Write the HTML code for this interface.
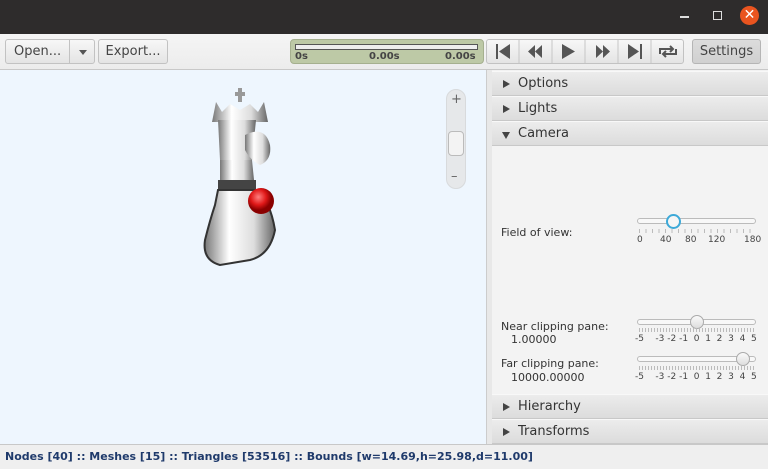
<!DOCTYPE html><html><head><style>
*{box-sizing:border-box;margin:0;padding:0}
body{width:768px;height:469px;overflow:hidden;font-family:"DejaVu Sans","Liberation Sans",sans-serif;font-size:13px;color:#333;background:#f2f2f2;position:relative}
.a{position:absolute}
.btn{position:absolute;border:1px solid #c2c2c2;border-radius:3px;background:linear-gradient(#f7f7f7,#e4e4e4);height:25px;top:39px;display:flex;align-items:center;justify-content:center;font-size:13px;color:#444}
.hd{position:absolute;left:492px;width:276px;height:25px;background:linear-gradient(#ececec,#dcdcdc);border-bottom:1px solid #c8c8c8;border-top:1px solid #f8f8f8;font-size:13px;color:#333;line-height:23px;padding-left:26px}
.tri{position:absolute;left:11px;top:8px;width:0;height:0;border-left:7px solid #444;border-top:4px solid transparent;border-bottom:4px solid transparent}
.trd{position:absolute;left:10px;top:10px;width:0;height:0;border-top:7px solid #444;border-left:4px solid transparent;border-right:4px solid transparent}
.lbl{position:absolute;font-size:11px;color:#333}
.sm{position:absolute;font-size:9px;color:#444}
.track{position:absolute;height:6px;border:1px solid #bbb;border-radius:3px;background:#f8f8f8}
</style></head><body>
<div class="a" style="left:0;top:0;width:768px;height:34px;background:#2e2c2c"></div>
<div class="a" style="left:680px;top:16px;width:9px;height:1.5px;background:#ddd"></div>
<div class="a" style="left:713px;top:11px;width:9px;height:9px;border:1.5px solid #ddd"></div>
<div class="a" style="left:740px;top:6px;width:19px;height:19px;border-radius:50%;background:#e9541f;color:#fff;font-size:14px;line-height:19px;text-align:center">✕</div>
<div class="a" style="left:0;top:34px;width:768px;height:36px;background:linear-gradient(#f5f5f5,#ececec);border-bottom:1px solid #c8c8c8"></div>
<div class="btn" style="left:5px;width:90px;justify-content:flex-start;padding-left:8px">Open...<span style="position:absolute;left:63px;top:0;bottom:0;border-left:1px solid #c2c2c2"></span><span style="position:absolute;left:73px;top:10px;border-top:5px solid #555;border-left:4px solid transparent;border-right:4px solid transparent"></span></div>
<div class="btn" style="left:98px;width:70px">Export...</div>
<div class="a" style="left:290px;top:39px;width:194px;height:25px;border:1px solid #a5b08f;border-radius:4px;background:#bdc9a6"></div>
<div class="a" style="left:295px;top:44px;width:183px;height:6px;border:1px solid #555;background:#eee"></div>
<div class="a" style="left:295px;top:51px;font-size:10px;font-weight:bold;color:#444">0s</div>
<div class="a" style="left:369px;top:51px;font-size:10px;font-weight:bold;color:#444">0.00s</div>
<div class="a" style="left:445px;top:51px;font-size:10px;font-weight:bold;color:#444">0.00s</div>
<div class="a" style="left:486px;top:39px;width:198px;height:25px;border:1px solid #c2c2c2;border-radius:3px;background:linear-gradient(#f7f7f7,#e4e4e4)"></div>
<svg class="a" style="left:486px;top:39px" width="198" height="25" fill="#555" stroke="#555">
<g stroke="#c6c6c6"><line x1="33" y1="1" x2="33" y2="24"/><line x1="66" y1="1" x2="66" y2="24"/><line x1="99" y1="1" x2="99" y2="24"/><line x1="132" y1="1" x2="132" y2="24"/><line x1="165" y1="1" x2="165" y2="24"/></g>
<rect x="10" y="5" width="2" height="15" stroke="none"/><path d="M24 5 L13 12.5 L24 20Z" stroke="none"/>
<path d="M49 6 L42 12.5 L49 19Z M56 6 L49 12.5 L56 19Z" stroke="none"/>
<path d="M76 5 L89 12.5 L76 20Z" stroke="none"/>
<path d="M110 6 L117 12.5 L110 19Z M117 6 L124 12.5 L117 19Z" stroke="none"/>
<path d="M142 5 L153 12.5 L142 20Z" stroke="none"/><rect x="154" y="5" width="2" height="15" stroke="none"/>
<path d="M174 15 V10 h13 M184 7 l3 3 -3 3 M190 10 v5 h-13 M180 18 l-3 -3 3 -3" fill="none" stroke-width="2"/>
</svg>
<div class="btn" style="left:692px;width:69px;background:linear-gradient(#dcdcdc,#d0d0d0);border-color:#b5b5b5">Settings</div>
<div class="a" style="left:0;top:70px;width:486px;height:374px;background:#eef6fe"></div>
<div class="a" style="left:486px;top:70px;width:6px;height:374px;background:#e8e8e8;border-left:1px solid #ccc"></div>
<div class="a" style="left:446px;top:89px;width:20px;height:100px;border-radius:10px;background:#e6e8ea;border:1px solid #d8dadc"></div>
<div class="a" style="left:451px;top:92px;font-size:13px;color:#666">+</div>
<div class="a" style="left:451px;top:169px;font-size:13px;color:#666">–</div>
<div class="a" style="left:448px;top:131px;width:16px;height:25px;border-radius:4px;background:#f3f3f3;border:1px solid #bbb"></div>
<svg class="a" style="left:190px;top:80px" width="100" height="190">
<defs><linearGradient id="g" x1="0" x2="1"><stop offset="0" stop-color="#777"/><stop offset=".35" stop-color="#fff"/><stop offset=".7" stop-color="#ddd"/><stop offset="1" stop-color="#666"/></linearGradient>
<radialGradient id="r" cx=".4" cy=".35"><stop offset="0" stop-color="#ff8080"/><stop offset=".6" stop-color="#e01818"/><stop offset="1" stop-color="#8a0000"/></radialGradient></defs>
<rect x="48" y="8" width="4" height="14" fill="#999"/><rect x="45" y="12" width="10" height="4" fill="#999"/>
<path d="M22 42 L26 22 L32 32 L40 24 L50 30 L60 24 L68 32 L74 22 L78 42Z" fill="url(#g)"/>
<path d="M28 40 L30 80 L62 80 L66 40Z" fill="url(#g)"/>
<path d="M55 55 Q75 45 80 65 Q82 80 70 85 Q60 80 55 70Z" fill="url(#g)"/>
<path d="M30 80 L62 80 L64 100 L30 100Z" fill="url(#g)"/>
<rect x="28" y="100" width="38" height="10" fill="#444"/>
<path d="M28 110 L66 110 Q80 120 85 150 Q80 175 60 180 L30 185 Q12 180 15 160 Q20 140 25 125Z" fill="url(#g)" stroke="#333" stroke-width="2"/>
<circle cx="71" cy="121" r="13" fill="url(#r)"/>
</svg>
<div class="hd" style="top:71px"><span class="tri"></span>Options</div>
<div class="hd" style="top:96px"><span class="tri"></span>Lights</div>
<div class="hd" style="top:121px"><span class="trd"></span>Camera</div>
<div class="a" style="left:492px;top:146px;width:276px;height:248px;background:#f3f3f3"></div>
<div class="lbl" style="left:501px;top:226px">Field of view:</div>
<div class="track" style="left:637px;top:218px;width:119px"></div>
<div class="a" style="left:666px;top:214px;width:15px;height:15px;border-radius:50%;border:2px solid #3da9d8;background:#f5f5f5"></div>
<div class="a" style="left:639px;top:229px;width:116px;height:4px;background:repeating-linear-gradient(90deg,#bbb 0 1px,transparent 1px 6.5px)"></div>
<div class="sm" style="left:637px;top:235px">0</div><div class="sm" style="left:660px;top:235px">40</div><div class="sm" style="left:685px;top:235px">80</div><div class="sm" style="left:708px;top:235px">120</div><div class="sm" style="left:744px;top:235px">180</div>
<div class="lbl" style="left:501px;top:320px">Near clipping pane:</div>
<div class="lbl" style="left:511px;top:333px">1.00000</div>
<div class="track" style="left:637px;top:319px;width:119px"></div>
<div class="a" style="left:690px;top:315px;width:14px;height:14px;border-radius:50%;border:1px solid #aaa;background:linear-gradient(#fafafa,#ddd)"></div>
<div class="a" style="left:639px;top:328px;width:116px;height:4px;background:repeating-linear-gradient(90deg,#bbb 0 1px,transparent 1px 3px)"></div>
<div class="sm" style="left:635px;top:334px">-5&nbsp;&nbsp;&nbsp;&nbsp;-3 -2 -1&nbsp; 0&nbsp; 1&nbsp; 2&nbsp; 3&nbsp; 4&nbsp; 5</div>
<div class="lbl" style="left:501px;top:357px">Far clipping pane:</div>
<div class="lbl" style="left:511px;top:371px">10000.00000</div>
<div class="track" style="left:637px;top:356px;width:119px"></div>
<div class="a" style="left:736px;top:352px;width:14px;height:14px;border-radius:50%;border:1px solid #aaa;background:linear-gradient(#fafafa,#ddd)"></div>
<div class="a" style="left:639px;top:366px;width:116px;height:4px;background:repeating-linear-gradient(90deg,#bbb 0 1px,transparent 1px 3px)"></div>
<div class="sm" style="left:635px;top:372px">-5&nbsp;&nbsp;&nbsp;&nbsp;-3 -2 -1&nbsp; 0&nbsp; 1&nbsp; 2&nbsp; 3&nbsp; 4&nbsp; 5</div>
<div class="hd" style="top:394px"><span class="tri"></span>Hierarchy</div>
<div class="hd" style="top:419px"><span class="tri"></span>Transforms</div>
<div class="a" style="left:0;top:444px;width:768px;height:25px;background:#efefef;border-top:1px solid #c8c8c8"></div>
<div class="a" style="left:5px;top:450px;font-size:11px;font-weight:bold;color:#1f3a6b">Nodes [40] :: Meshes [15] :: Triangles [53516] :: Bounds [w=14.69,h=25.98,d=11.00]</div>
</body></html>
